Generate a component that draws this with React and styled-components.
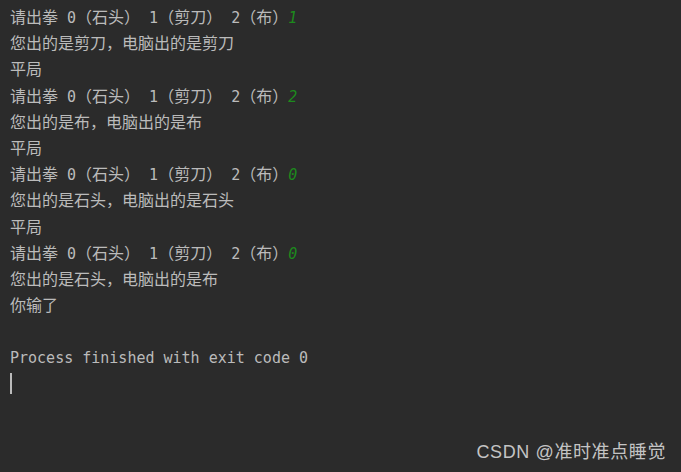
import React from "react";
import styled, { createGlobalStyle } from "styled-components";

const GlobalStyle = createGlobalStyle`
  html, body {
    margin: 0;
    padding: 0;
    background: #2b2b2b;
  }
`;

const Console = styled.div`
  position: relative;
  width: 681px;
  height: 472px;
  box-sizing: border-box;
  padding: 3px 10px 0;
  background: #2b2b2b;
  color: #bbbbbb;
  overflow: hidden;
`;

const Line = styled.div`
  height: 26.2px;
  line-height: 26.2px;
  font-family: "Noto Sans CJK SC", sans-serif;
  font-size: 16px;
  white-space: pre;
`;

const Mono = styled.span`
  font-family: "DejaVu Sans Mono", "Liberation Mono", monospace;
  font-size: 15px;
  color: ${(p) => (p.$input ? "#1d8a1d" : "#bbbbbb")};
  font-style: ${(p) => (p.$input ? "italic" : "normal")};
`;

const Caret = styled.div`
  width: 2px;
  height: 21px;
  margin-top: 3px;
  background: #bbbbbb;
`;

const Watermark = styled.div`
  position: absolute;
  right: 15px;
  bottom: 9px;
  font-family: "Liberation Sans", "Noto Sans CJK SC", sans-serif;
  font-size: 18px;
  letter-spacing: 0.6px;
  color: #c4c4c4;
`;

const Prompt = ({ value }) => (
  <Line>
    请出拳<Mono> 0</Mono>（石头）<Mono> 1</Mono>（剪刀）<Mono> 2</Mono>（布）
    <Mono $input>{value}</Mono>
  </Line>
);

const rounds = [
  { input: "1", said: "您出的是剪刀，电脑出的是剪刀", result: "平局" },
  { input: "2", said: "您出的是布，电脑出的是布", result: "平局" },
  { input: "0", said: "您出的是石头，电脑出的是石头", result: "平局" },
  { input: "0", said: "您出的是石头，电脑出的是布", result: "你输了" },
];

export default function App() {
  return (
    <>
      <GlobalStyle />
      <Console>
        {rounds.map((r, i) => (
          <React.Fragment key={i}>
            <Prompt value={r.input} />
            <Line>{r.said}</Line>
            <Line>{r.result}</Line>
          </React.Fragment>
        ))}
        <Line />
        <Line>
          <Mono>Process finished with exit code 0</Mono>
        </Line>
        <Caret />
        <Watermark>CSDN @准时准点睡觉</Watermark>
      </Console>
    </>
  );
}
